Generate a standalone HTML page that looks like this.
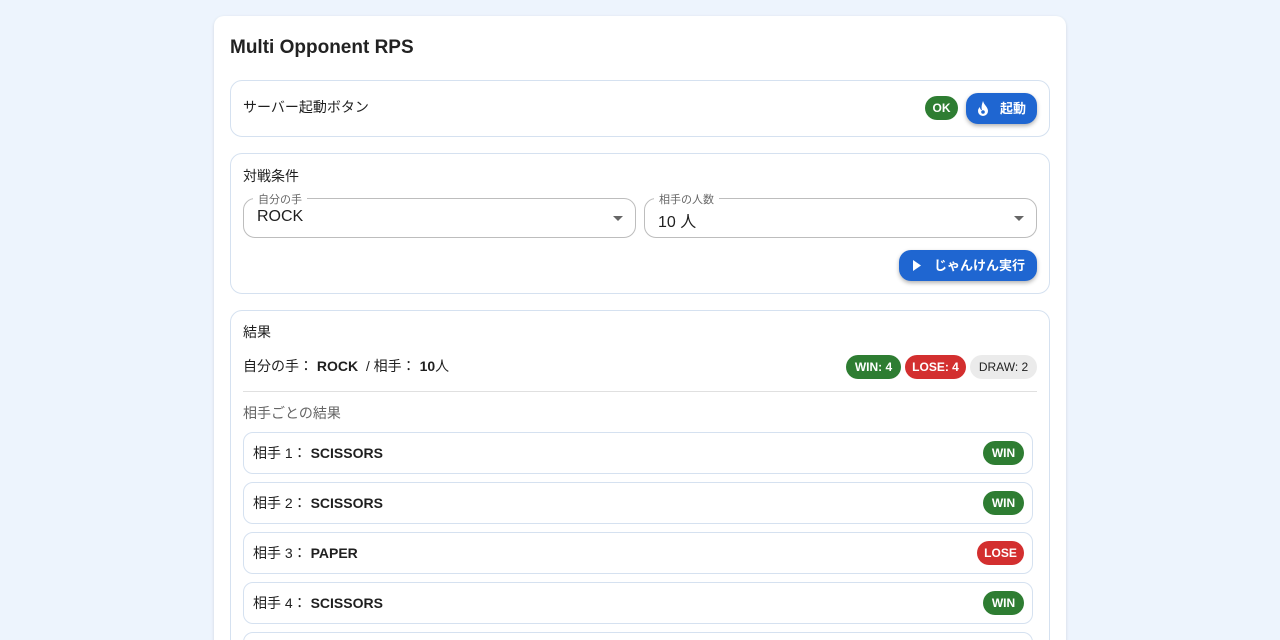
<!DOCTYPE html>
<html style="height:640px;overflow:hidden"><head><meta charset="utf-8"><style>
*{box-sizing:border-box;margin:0;padding:0}
body{width:1280px;height:640px;overflow:hidden;background:#edf4fd;font-family:"Liberation Sans","Noto Sans CJK JP",sans-serif;color:#1f1f1f;position:relative}
.card{position:absolute;left:214px;top:16px;width:852px;height:700px;background:#fff;border-radius:10px;box-shadow:0 1px 3px rgba(0,0,0,.12)}
h1{position:absolute;left:16px;top:21px;font-size:19px;font-weight:bold;color:#222}
.sec{position:absolute;left:16px;width:820px;border:1px solid #d5e1f0;border-radius:12px}
.abs{position:absolute}
.chip{position:absolute;height:24px;border-radius:12px;font-size:12px;font-weight:bold;color:#fff;line-height:24px;text-align:center}
.g{background:#2e7d32}.r{background:#d32f2f}.gr{background:#ebebeb;color:#222;font-weight:normal}
.btn{position:absolute;background:#1f66d1;color:#fff;border-radius:12px;height:31px;font-size:13px;font-weight:bold;line-height:31px;box-shadow:0 2px 4px rgba(0,0,0,.3)}
.sel{position:absolute;top:44px;height:40px;border:1px solid #bdbdbd;border-radius:12px}
.sel .lab{position:absolute;left:9px;top:-8px;background:#fff;padding:0 5px;font-size:11px;color:#666}
.sel .val{position:absolute;left:13px;top:9px;font-size:16px}
.sel .arr{position:absolute;right:12px;top:17px;width:0;height:0;border-left:5px solid transparent;border-right:5px solid transparent;border-top:5px solid #666}
.row{position:absolute;left:12px;width:790px;height:42px;border:1px solid #d5e1f0;border-radius:10px;font-size:14px}
.row span.t{position:absolute;left:9px;top:10px}
.row .chip{right:8px;top:8px}
</style></head><body>
<div class="card">
<h1>Multi Opponent RPS</h1>
<div class="sec" style="top:64px;height:57px">
 <div class="abs" style="left:12px;top:16px;font-size:14px">サーバー起動ボタン</div>
 <div class="chip g" style="left:694px;top:15px;width:33px">OK</div>
 <div class="btn" style="left:735px;top:12px;width:71px"><svg class="abs" style="left:10px;top:8px" width="14" height="15" viewBox="0 0 14 15"><path d="M7 0C8 4 12 6 12 10a5 5 0 0 1-10 0c0-2 1-3 2-4 0 2 1 3 2 3C5 6 6 3 7 0z" fill="#fff"/><circle cx="7" cy="11" r="1.8" fill="#1f66d1"/></svg><span class="abs" style="left:34px">起動</span></div>
</div>
<div class="sec" style="top:137px;height:141px">
 <div class="abs" style="left:12px;top:12px;font-size:14px">対戦条件</div>
 <div class="sel" style="left:12px;width:393px"><span class="lab">自分の手</span><span class="val">ROCK</span><span class="arr"></span></div>
 <div class="sel" style="left:413px;width:393px"><span class="lab">相手の人数</span><span class="val">10 人</span><span class="arr"></span></div>
 <div class="btn" style="left:668px;top:96px;width:138px"><svg class="abs" style="left:13px;top:10px" width="10" height="11"><path d="M1 0L9 5.5 1 11z" fill="#fff"/></svg><span class="abs" style="left:35px">じゃんけん実行</span></div>
</div>
<div class="sec" style="top:294px;height:420px">
 <div class="abs" style="left:12px;top:11px;font-size:14px">結果</div>
 <div class="abs" style="left:12px;top:45px;font-size:14px">自分の手： <b>ROCK</b> &nbsp;/ 相手： <b>10</b>人</div>
 <div class="chip g" style="left:615px;top:44px;width:55px">WIN: 4</div>
 <div class="chip r" style="left:674px;top:44px;width:61px">LOSE: 4</div>
 <div class="chip gr" style="left:739px;top:44px;width:67px">DRAW: 2</div>
 <div class="abs" style="left:12px;top:80px;width:794px;border-top:1px solid #e0e0e0"></div>
 <div class="abs" style="left:12px;top:92px;font-size:14px;color:#666">相手ごとの結果</div>
 <div class="row" style="top:121px"><span class="t">相手 1： <b>SCISSORS</b></span><span class="chip g" style="width:41px">WIN</span></div>
 <div class="row" style="top:171px"><span class="t">相手 2： <b>SCISSORS</b></span><span class="chip g" style="width:41px">WIN</span></div>
 <div class="row" style="top:221px"><span class="t">相手 3： <b>PAPER</b></span><span class="chip r" style="width:47px">LOSE</span></div>
 <div class="row" style="top:271px"><span class="t">相手 4： <b>SCISSORS</b></span><span class="chip g" style="width:41px">WIN</span></div>
 <div class="row" style="top:321px"></div>
</div>
</div>
</body></html>
